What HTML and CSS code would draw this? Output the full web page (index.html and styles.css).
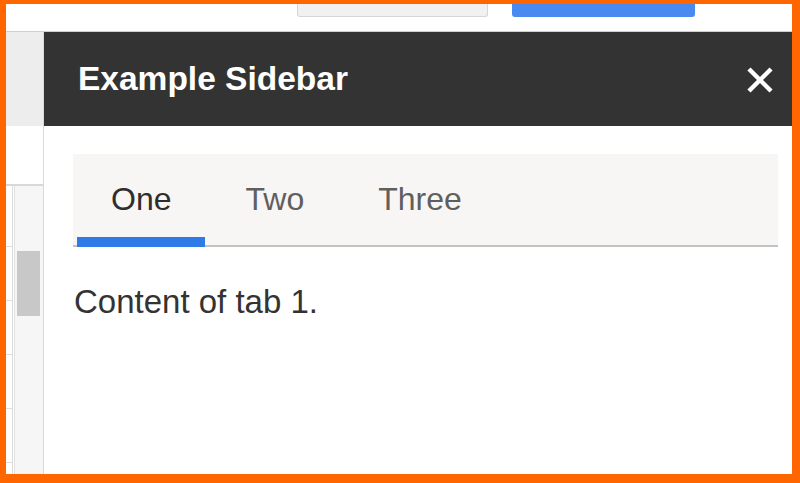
FILE: index.html
```html
<!DOCTYPE html>
<html lang="en">
<head>
<meta charset="utf-8">
<title>Example Sidebar</title>
<link rel="stylesheet" href="styles.css">
</head>
<body>
<div class="frame">
  <div class="topbar">
    <div class="btn btn-gray"></div>
    <div class="btn btn-blue"></div>
  </div>
  <div class="main">
    <div class="rail">
      <div class="rail-top"></div>
      <div class="rail-blank"></div>
      <div class="rail-grid">
        <div class="cells">
          <div class="cell cell-first"></div>
          <div class="cell"></div>
          <div class="cell"></div>
          <div class="cell"></div>
          <div class="cell"></div>
        </div>
        <div class="track"><div class="thumb"></div></div>
      </div>
    </div>
    <div class="sidebar">
      <div class="sb-header">
        <h1 class="sb-title">Example Sidebar</h1>
        <svg class="sb-close" width="26" height="26" viewBox="0 0 26 26" aria-label="Close">
          <path d="M3.5 3.5 L22.5 22.5 M22.5 3.5 L3.5 22.5" stroke="#ffffff" stroke-width="4.4" stroke-linecap="square" fill="none"/>
        </svg>
      </div>
      <div class="sb-body">
        <div class="tabs">
          <div class="tab active">One</div>
          <div class="tab">Two</div>
          <div class="tab">Three</div>
        </div>
        <div class="content">Content of tab 1.</div>
      </div>
    </div>
  </div>
</div>
</body>
</html>
```
FILE: styles.css
```css
html, body {
  margin: 0;
  padding: 0;
  background: #ffffff;
}

.frame {
  width: 800px;
  height: 483px;
  box-sizing: border-box;
  border-style: solid;
  border-color: #ff6600;
  border-width: 4px 8px 9px 6px;
  display: flex;
  flex-direction: column;
  overflow: hidden;
  background: #ffffff;
  font-family: "Liberation Sans", Arial, sans-serif;
}

.topbar {
  height: 27px;
  flex: none;
  border-bottom: 1px solid #cfcfcf;
  display: flex;
  align-items: flex-start;
  padding-left: 291px;
  gap: 24px;
}

.btn {
  height: 13px;
  box-sizing: border-box;
  border-radius: 0 0 3px 3px;
}

.btn-gray {
  width: 191px;
  background: #f1f1f1;
  border: 1px solid #d6d6d6;
  border-top: none;
}

.btn-blue {
  width: 183px;
  background: #4a8af0;
}

.main {
  flex: 1;
  display: flex;
  min-height: 0;
}

.rail {
  width: 38px;
  flex: none;
  box-sizing: border-box;
  border-right: 1px solid #dadada;
  display: flex;
  flex-direction: column;
}

.rail-top {
  height: 94px;
  flex: none;
  background: #ededed;
}

.rail-blank {
  height: 58px;
  flex: none;
  background: #ffffff;
  border-bottom: 2px solid #d8d8d8;
}

.rail-grid {
  flex: 1;
  display: flex;
}

.cells {
  width: 6px;
  border-right: 1px solid #dcdcdc;
  display: flex;
  flex-direction: column;
}

.cell {
  height: 53px;
  flex: none;
  border-bottom: 1px solid #dedede;
}

.cell-first {
  height: 60px;
}

.track {
  flex: 1;
  margin-left: 1px;
  background: #f6f6f6;
  border-left: 1px solid #e2e2e2;
  padding: 65px 0 0 2px;
}

.thumb {
  width: 23px;
  height: 65px;
  background: #c8c8c8;
}

.sidebar {
  flex: 1;
  display: flex;
  flex-direction: column;
  background: #ffffff;
}

.sb-header {
  height: 94px;
  flex: none;
  background: #333333;
  display: flex;
  align-items: center;
  justify-content: space-between;
  padding: 0 19px 0 34px;
}

.sb-title {
  margin: 0;
  font-size: 33.5px;
  font-weight: bold;
  line-height: 1;
  color: #ffffff;
}

.sb-close {
  display: block;
  margin-top: 2px;
}

.sb-body {
  padding: 28px 14px 0 29px;
}

.tabs {
  background: #f7f6f5;
  border-bottom: 2px solid #c3c3c3;
  display: flex;
  gap: 6px;
  padding-left: 4px;
}

.tab {
  font-size: 32px;
  line-height: 1;
  padding: 29px 34px 22px;
  border-bottom: 10px solid transparent;
  margin-bottom: -2px;
  color: #5f5f5f;
}

.tab.active {
  border-bottom-color: #2f7ae6;
  color: #2e2e2e;
}

.content {
  margin: 38px 0 0 1px;
  font-size: 33px;
  line-height: 1;
  color: #333333;
}
```
